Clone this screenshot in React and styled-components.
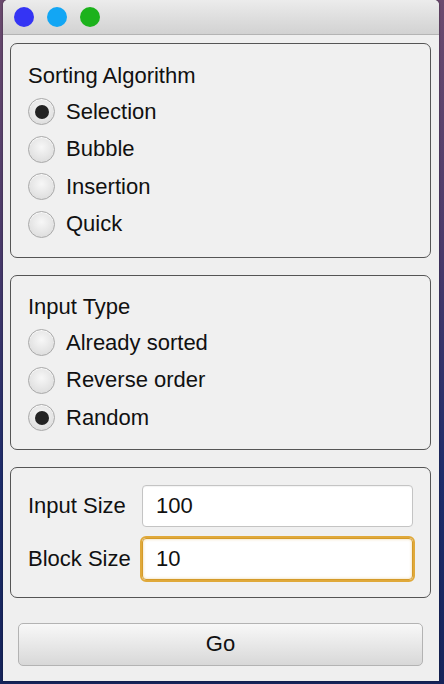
import React, { useState } from "react";
import styled, { createGlobalStyle } from "styled-components";

const GlobalStyle = createGlobalStyle`
	html, body {
		margin: 0;
		padding: 0;
	}
	body {
		width: 444px;
		height: 684px;
		overflow: hidden;
		background: linear-gradient(180deg, #6b4a6e 0%, #4b3a6a 35%, #1d2c6a 70%, #16245a 100%);
		font-family: "Liberation Sans", Arial, sans-serif;
	}
`;

const Window = styled.div`
	margin-left: 3px;
	width: 436px;
	height: 681px;
	background: #efefef;
	border-radius: 5px 5px 0 0;
	display: flex;
	flex-direction: column;
	overflow: hidden;
	box-shadow: 0 0 2px rgba(0, 0, 0, 0.5);
`;

const TitleBar = styled.div`
	height: 35px;
	flex-shrink: 0;
	box-sizing: border-box;
	display: flex;
	align-items: center;
	gap: 13px;
	padding: 0 0 0 11px;
	background: linear-gradient(180deg, #ececec 0%, #dcdcdc 60%, #d2d2d2 100%);
	border-bottom: 1px solid #b4b4b4;
`;

const Light = styled.span`
	width: 20px;
	height: 20px;
	border-radius: 50%;
	background: ${(props) => props.color};
`;

const Content = styled.div`
	display: flex;
	flex-direction: column;
	padding: 8px 8px 0 7px;
`;

const Group = styled.div`
	border: 1px solid #555;
	border-radius: 7px;
	background: #f0f0f0;
	padding: ${(props) => props.padding};
	margin-bottom: ${(props) => props.marginBottom};
	display: flex;
	flex-direction: column;
`;

const Title = styled.div`
	font-size: 22px;
	line-height: 26px;
	color: #111;
	margin-bottom: 4px;
`;

const Option = styled.label`
	display: flex;
	align-items: center;
	gap: 11px;
	height: 37.5px;
	flex-shrink: 0;
	font-size: 22px;
	color: #111;
	cursor: pointer;
`;

const Radio = styled.span`
	width: 27px;
	height: 27px;
	flex-shrink: 0;
	box-sizing: border-box;
	border-radius: 50%;
	border: 1px solid #a9a9a9;
	background: radial-gradient(circle at 50% 40%, #f7f7f7 0%, #e4e4e4 60%, #d6d6d6 100%);
	box-shadow: inset 0 1px 1px rgba(255, 255, 255, 0.8);
	display: flex;
	align-items: center;
	justify-content: center;

	&::after {
		content: "";
		width: 14px;
		height: 14px;
		border-radius: 50%;
		background: #222;
		display: ${(props) => (props.checked ? "block" : "none")};
	}
`;

const FieldGrid = styled.div`
	display: grid;
	grid-template-columns: 103px minmax(0, 1fr);
	column-gap: 11px;
	row-gap: 11px;
	align-items: center;
`;

const FieldLabel = styled.span`
	font-size: 22px;
	color: #111;
	white-space: nowrap;
`;

const TextInput = styled.input`
	width: 100%;
	min-width: 0;
	height: 42px;
	box-sizing: border-box;
	border: 1px solid ${(props) => (props.focused ? "#d49a2a" : "#c4c4c4")};
	border-radius: 4px;
	background: #fff;
	padding: 0 13px;
	font-size: 22px;
	font-family: "Liberation Sans", Arial, sans-serif;
	color: #111;
	outline: ${(props) => (props.focused ? "2px solid #e0a93a" : "none")};
	outline-offset: 0;
	box-shadow: ${(props) =>
		props.focused ? "inset 0 0 3px rgba(224, 169, 58, 0.5)" : "inset 0 1px 1px rgba(0,0,0,0.05)"};
`;

const GoButton = styled.button`
	margin: 25px 8px 0 8px;
	height: 43px;
	border: 1px solid #b3b3b3;
	border-radius: 5px;
	background: linear-gradient(180deg, #f8f8f8 0%, #e8e8e8 50%, #d8d8d8 100%);
	font-family: "Liberation Sans", Arial, sans-serif;
	font-size: 22px;
	color: #111;
	cursor: pointer;
`;

const algorithms = ["Selection", "Bubble", "Insertion", "Quick"];
const inputTypes = ["Already sorted", "Reverse order", "Random"];

export default function App() {
	const [algorithm, setAlgorithm] = useState("Selection");
	const [inputType, setInputType] = useState("Random");
	const [inputSize, setInputSize] = useState("100");
	const [blockSize, setBlockSize] = useState("10");

	return (
		<>
			<GlobalStyle />
			<Window>
				<TitleBar>
					<Light color='#3434f4' />
					<Light color='#12a6f4' />
					<Light color='#1cb21c' />
				</TitleBar>
				<Content>
					<Group padding='19px 17px 14px 17px' marginBottom='17px'>
						<Title>Sorting Algorithm</Title>
						{algorithms.map((name) => (
							<Option key={name} onClick={() => setAlgorithm(name)}>
								<Radio checked={algorithm === name} />
								{name}
							</Option>
						))}
					</Group>
					<Group padding='18px 17px 12px 17px' marginBottom='17px'>
						<Title>Input Type</Title>
						{inputTypes.map((name) => (
							<Option key={name} onClick={() => setInputType(name)}>
								<Radio checked={inputType === name} />
								{name}
							</Option>
						))}
					</Group>
					<Group padding='17px'>
						<FieldGrid>
							<FieldLabel>Input Size</FieldLabel>
							<TextInput
								value={inputSize}
								onChange={(e) => setInputSize(e.target.value)}
							/>
							<FieldLabel>Block Size</FieldLabel>
							<TextInput
								focused
								value={blockSize}
								onChange={(e) => setBlockSize(e.target.value)}
							/>
						</FieldGrid>
					</Group>
					<GoButton>Go</GoButton>
				</Content>
			</Window>
		</>
	);
}
